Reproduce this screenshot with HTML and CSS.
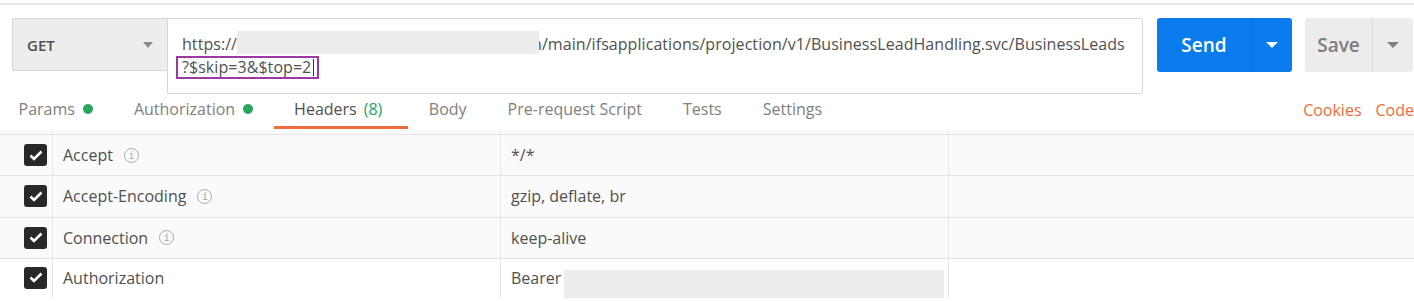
FILE: index.html
```html
<!DOCTYPE html>
<html>
<head>
<meta charset="utf-8">
<link rel="stylesheet" href="styles.css">
</head>
<body>
<div class="topline"></div>
<div class="reqbar">
  <div class="method">
    <span class="method-label">GET</span>
    <svg class="caret" width="10" height="6" viewBox="0 0 10 6"><path d="M0 0 L10 0 L5 6 Z" fill="#8a8a8a"/></svg>
  </div>
  <div class="url">
    <div class="url-line">https://<span class="redact"></span>n/main/ifsapplications/projection/v1/BusinessLeadHandling.svc/BusinessLeads</div>
    <div class="url-line"><span class="hl">?$skip=3&amp;$top=2<span class="cursor"></span></span></div>
  </div>
  <div class="btn send">
    <span class="btn-label">Send</span>
    <span class="btn-drop"><svg width="12" height="6" viewBox="0 0 12 6"><path d="M0 0 L12 0 L6 6 Z" fill="#ffffff"/></svg></span>
  </div>
  <div class="btn save">
    <span class="btn-label">Save</span>
    <span class="btn-drop"><svg width="12" height="6" viewBox="0 0 12 6"><path d="M0 0 L12 0 L6 6 Z" fill="#7d7d7d"/></svg></span>
  </div>
</div>
<div class="tabbar">
  <div class="tabs">
    <div class="tab">Params<span class="dot"></span></div>
    <div class="tab">Authorization<span class="dot"></span></div>
    <div class="tab active">Headers<span class="count">(8)</span></div>
    <div class="tab">Body</div>
    <div class="tab">Pre-request Script</div>
    <div class="tab">Tests</div>
    <div class="tab">Settings</div>
  </div>
  <div class="links">
    <span class="link">Cookies</span>
    <span class="link">Code</span>
  </div>
</div>
<div class="table">
  <div class="row head"><div class="cell"></div><div class="cell"></div><div class="cell"></div><div class="cell last"></div></div>
  <div class="row shaded">
    <div class="cell chk"><span class="box"><svg width="14" height="11" viewBox="0 0 14 11"><path d="M1.5 5.5 L5 9 L12.5 1.5" fill="none" stroke="#fff" stroke-width="2.6"/></svg></span></div>
    <div class="cell key">Accept <span class="info">i</span></div>
    <div class="cell val">*/*</div>
    <div class="cell last"></div>
  </div>
  <div class="row shaded">
    <div class="cell chk"><span class="box"><svg width="14" height="11" viewBox="0 0 14 11"><path d="M1.5 5.5 L5 9 L12.5 1.5" fill="none" stroke="#fff" stroke-width="2.6"/></svg></span></div>
    <div class="cell key">Accept-Encoding <span class="info">i</span></div>
    <div class="cell val">gzip, deflate, br</div>
    <div class="cell last"></div>
  </div>
  <div class="row shaded">
    <div class="cell chk"><span class="box"><svg width="14" height="11" viewBox="0 0 14 11"><path d="M1.5 5.5 L5 9 L12.5 1.5" fill="none" stroke="#fff" stroke-width="2.6"/></svg></span></div>
    <div class="cell key">Connection <span class="info">i</span></div>
    <div class="cell val">keep-alive</div>
    <div class="cell last"></div>
  </div>
  <div class="row plain">
    <div class="cell chk"><span class="box"><svg width="14" height="11" viewBox="0 0 14 11"><path d="M1.5 5.5 L5 9 L12.5 1.5" fill="none" stroke="#fff" stroke-width="2.6"/></svg></span></div>
    <div class="cell key">Authorization</div>
    <div class="cell val">Bearer<span class="redact2"></span></div>
    <div class="cell last"></div>
  </div>
</div>
</body>
</html>
```
FILE: styles.css
```css
* { box-sizing: border-box; }
html, body { margin: 0; padding: 0; background: #fff; }
body {
  font-family: "Open Sans", "Noto Sans", sans-serif;
  font-size: 16px;
  color: #505050;
  width: 1414px;
  height: 301px;
  overflow: hidden;
}
.topline { margin-top: 3px; height: 2px; background: #e6e6e6; }

.reqbar {
  display: flex;
  align-items: flex-start;
  padding-left: 12px;
  margin-top: 13px;
  height: 76px;
}
.method {
  width: 155px;
  height: 53px;
  background: #ededed;
  border: 1px solid #d6d6d6;
  border-right: none;
  border-radius: 3px 0 0 3px;
  display: flex;
  align-items: center;
  justify-content: space-between;
  padding: 0 14px 0 14px;
}
.method-label { font-weight: 600; font-size: 15px; color: #505050; }
.caret { margin-top: 1px; }

.url {
  width: 976px;
  height: 76px;
  border: 1px solid #d6d6d6;
  border-radius: 0 3px 3px 0;
  padding: 14px 0 0 14px;
}
.url-line { line-height: 23px; height: 23px; white-space: nowrap; color: #505050; letter-spacing: 0.06px; }
.redact {
  position: relative;
  display: inline-block;
  width: 302px;
  height: 23px;
  background: #ececec;
  vertical-align: top;
  margin-top: -2px;
  margin-right: -7px;
}
.hl {
  display: inline-block;
  border: 2px solid #9b3aa5;
  margin-left: -6px;
  padding: 0 3px 0 4px;
  line-height: 19px;
  height: 23px;
}
.cursor {
  display: inline-block;
  width: 1px;
  height: 17px;
  background: #333;
  vertical-align: -3px;
  margin-left: 2px;
}

.btn {
  display: flex;
  height: 54px;
  border-radius: 3px;
  align-items: stretch;
}
.send { margin-left: 14px; width: 135px; background: #097bed; color: #fff; }
.save { margin-left: 13px; width: 108px; background: #ececec; color: #7d7d7d; }
.btn-label {
  flex: 1;
  display: flex;
  align-items: center;
  justify-content: center;
  font-weight: 600;
  font-size: 19px;
}
.btn-drop {
  width: 41px;
  display: flex;
  align-items: center;
  justify-content: center;
}
.send .btn-drop { border-left: 1px solid #0b6fd4; }
.save .btn-label { width: 67px; flex: none; }
.save .btn-drop { border-left: 1px solid #dadada; }

.tabbar {
  display: flex;
  justify-content: space-between;
  height: 36px;
}
.tabs { display: flex; margin-left: -2px; }
.tab {
  height: 35px;
  padding: 0 20.5px 3px;
  display: flex;
  align-items: center;
  color: #808080;
  border-bottom: 3px solid transparent;
  white-space: nowrap;
}
.tab.active { color: #505050; border-bottom-color: #f26b3a; padding-right: 26px; }
.dot {
  display: inline-block;
  width: 10px;
  height: 10px;
  border-radius: 50%;
  background: #26a65b;
  margin-left: 8px;
}
.count { color: #26a65b; margin-left: 7px; }
.links { display: flex; gap: 14px; height: 32px; align-items: center; }
.link { color: #f26b3a; }

.table { display: flex; flex-direction: column; }
.row {
  display: grid;
  grid-template-columns: 53px 448px 448px 1fr;
  height: 41.33px;
  border-bottom: 1px solid #e3e3e3;
}
.row.head { height: 5px; background: #fafafa; }
.row.shaded { background: #fafafa; }
.row.plain { border-bottom: none; height: 38px; }
.cell {
  border-right: 1px solid #e6e6e6;
  display: flex;
  align-items: center;
  white-space: nowrap;
}
.cell.last { border-right: none; }
.chk { padding-left: 24px; }
.box {
  width: 23px;
  height: 22px;
  background: #282828;
  border-radius: 3px;
  display: flex;
  align-items: center;
  justify-content: center;
}
.key, .val { padding-left: 10px; }
.info {
  display: inline-flex;
  align-items: center;
  justify-content: center;
  width: 15px;
  height: 15px;
  border: 1px solid #a8a8a8;
  border-radius: 50%;
  color: #a8a8a8;
  font-size: 10px;
  font-family: "DejaVu Sans Mono", monospace;
  margin-left: 11px;
}
.redact2 {
  display: inline-block;
  width: 380px;
  height: 28px;
  background: #ececec;
  margin-left: 3px;
  align-self: flex-end;
  margin-bottom: -1px;
}
```
